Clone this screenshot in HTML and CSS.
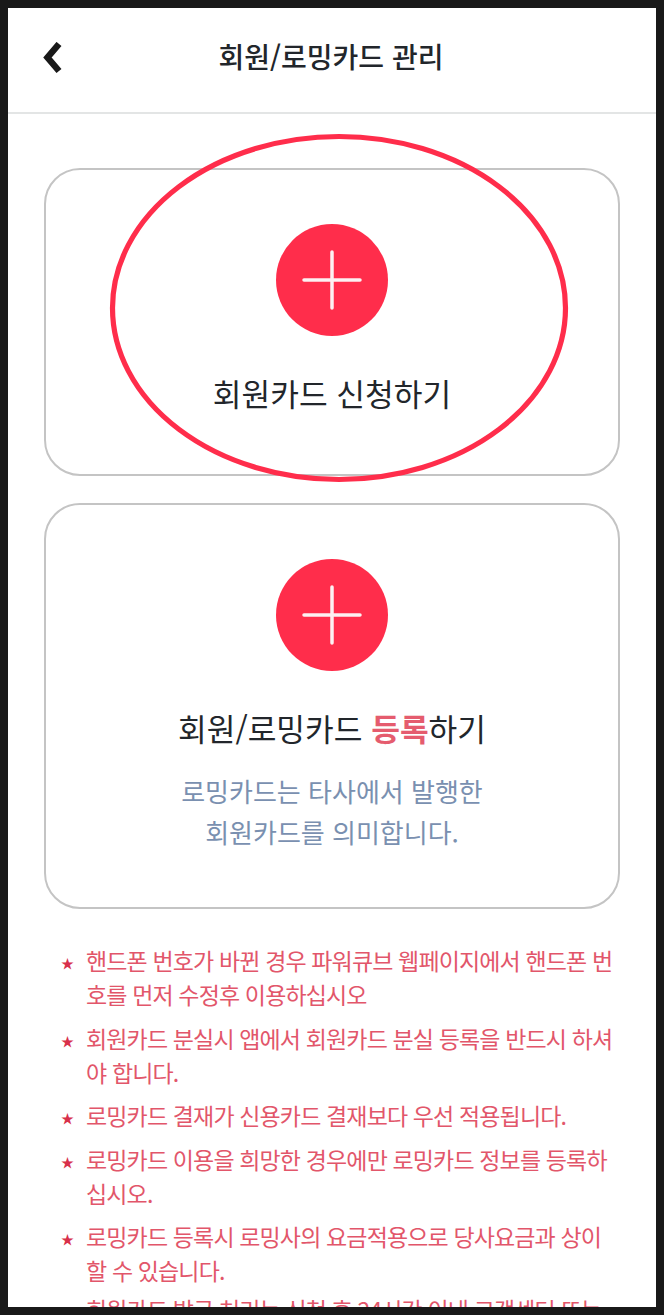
FILE: index.html
```html
<!DOCTYPE html>
<html lang="ko">
<head>
<meta charset="utf-8">
<title>회원/로밍카드 관리</title>
<link rel="stylesheet" href="styles.css">
</head>
<body>
<main class="phone">
  <header class="topbar">
    <svg class="back" viewBox="0 0 22 32" aria-hidden="true"><path d="M18 2 6.5 15.5 18 29" fill="none" stroke="#191919" stroke-width="6.5"/></svg>
    <h1 class="title">회원/로밍카드 관리</h1>
  </header>
  <section class="content">
    <div class="card card-apply">
      <div class="plus"><svg viewBox="0 0 112 112" aria-hidden="true"><path d="M56 28V84M28 56H84" stroke="#fdf0f2" stroke-width="3.5" stroke-linecap="round"/></svg></div>
      <p class="card-label">회원카드 신청하기</p>
    </div>
    <div class="card card-register">
      <div class="plus"><svg viewBox="0 0 112 112" aria-hidden="true"><path d="M56 28V84M28 56H84" stroke="#fdf0f2" stroke-width="3.5" stroke-linecap="round"/></svg></div>
      <p class="card-label">회원/로밍카드 <strong class="accent">등록</strong>하기</p>
      <p class="card-note">로밍카드는 타사에서 발행한<br>회원카드를 의미합니다.</p>
    </div>
    <ul class="notes">
      <li>핸드폰 번호가 바뀐 경우 파워큐브 웹페이지에서 핸드폰 번호를 먼저 수정후 이용하십시오</li>
      <li>회원카드 분실시 앱에서 회원카드 분실 등록을 반드시 하셔야 합니다.</li>
      <li>로밍카드 결재가 신용카드 결재보다 우선 적용됩니다.</li>
      <li>로밍카드 이용을 희망한 경우에만 로밍카드 정보를 등록하십시오.</li>
      <li>로밍카드 등록시 로밍사의 요금적용으로 당사요금과 상이할 수 있습니다.</li>
      <li>회원카드 발급 처리는 신청 후 24시간 이내 고객센터 또는</li>
    </ul>
  </section>
  <svg class="circle-mark" viewBox="0 0 464 354" aria-hidden="true"><ellipse cx="232" cy="177" rx="226.5" ry="171.5" fill="none" stroke="#ff2d4b" stroke-width="5.2"/></svg>
</main>
</body>
</html>
```
FILE: styles.css
```css
* { box-sizing: border-box; }
html, body { margin: 0; height: 100%; }
body {
  background: #191919;
  padding: 8px;
  font-family: "Noto Sans CJK KR", "Noto Sans", sans-serif;
}
.phone {
  position: relative;
  height: 1299px;
  background: #fff;
  overflow: hidden;
}
.topbar {
  position: relative;
  height: 106px;
  border-bottom: 2px solid #e3e5e5;
  display: flex;
  align-items: center;
  justify-content: center;
  padding: 0 2px 8px 0;
}
.back {
  position: absolute;
  left: 33px;
  top: 34px;
  width: 22px;
  height: 32px;
}
.title {
  margin: 0;
  font-size: 28px;
  font-weight: 500;
  color: #22262b;
  line-height: 36px;
}
.content { padding: 54px 36px 0 36px; }
.card {
  border: 2px solid #c4c4c4;
  border-radius: 36px;
  display: flex;
  flex-direction: column;
  align-items: center;
  padding-top: 54px;
}
.card-apply { height: 308px; }
.card-register { height: 406px; margin-top: 27px; }
.plus {
  width: 112px;
  height: 112px;
  border-radius: 50%;
  background: #ff2d4b;
}
.plus svg { display: block; width: 112px; height: 112px; }
.card-label {
  margin: 35px 0 0;
  font-size: 31.2px;
  line-height: 44px;
  color: #22262b;
}
.accent { color: #e55c6e; font-weight: 700; }
.card-note {
  margin: 20px 0 0;
  font-size: 26px;
  line-height: 41px;
  text-align: center;
  color: #7a90b0;
}
.notes {
  list-style: none;
  margin: 34px 0 0;
  padding: 0 4px 0 42px;
  font-size: 23px;
  letter-spacing: -0.86px;
  line-height: 34px;
  color: #e2566a;
}
.notes li { position: relative; margin-bottom: 9.5px; }
.notes li:last-child { margin-top: -5px; }
.notes li::before {
  content: "★";
  position: absolute;
  left: -25px;
  top: 3px;
  font-size: 13px;
  letter-spacing: 0;
  color: #d8304a;
}
.circle-mark {
  position: absolute;
  left: 99px;
  top: 123px;
  width: 464px;
  height: 354px;
}
```
